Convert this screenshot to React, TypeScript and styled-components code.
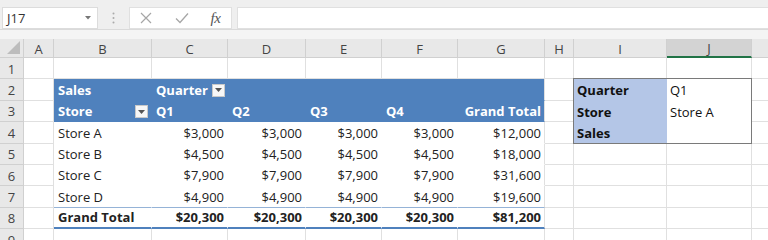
import React from 'react';
import styled, { createGlobalStyle } from 'styled-components';

const colors = {
  bar: '#efefef',
  strip: '#f4f4f4',
  barLine: '#dadada',
  head: '#e8e8e8',
  headActive: '#d3d3d3',
  headLine: '#d0d0d0',
  grid: '#e0e0e0',
  pivot: '#4f81bd',
  rule: '#95b3d7',
  label: '#b4c6e7',
  green: '#217346',
  text: '#222',
  headText: '#444',
};

const font = '"Open Sans", "Liberation Sans", sans-serif';

const GlobalStyle = createGlobalStyle`
  html, body {
    margin: 0;
    padding: 0;
    background: #fff;
    font-family: ${font};
  }
`;

const Window = styled.div`
  width: 768px;
  height: 240px;
  overflow: hidden;
  background: #fff;
`;

const Toolbar = styled.div`
  height: 30px;
  box-sizing: border-box;
  padding: 7px 0 0 2px;
  display: flex;
  align-items: flex-start;
  background: ${colors.bar};
  border-bottom: 1px solid ${colors.barLine};
`;

const NameBox = styled.div`
  width: 96px;
  height: 22px;
  box-sizing: border-box;
  background: #fff;
  border: 1px solid #dcdcdc;
  display: flex;
  align-items: center;
  justify-content: space-between;
  padding: 0 6px 0 4px;
  font-size: 13px;
  color: #333;
`;

const Grip = styled.div`
  width: 31px;
  height: 22px;
  display: flex;
  align-items: center;
  justify-content: center;
`;

const FxButtons = styled.div`
  width: 103px;
  height: 22px;
  box-sizing: border-box;
  background: #fff;
  border: 1px solid #e0e0e0;
  display: grid;
  grid-template-columns: 32px 40px 1fr;
  align-items: center;
  justify-items: center;
`;

const Fx = styled.span`
  font-family: "Liberation Serif", serif;
  font-style: italic;
  font-size: 15px;
  color: #555;
  letter-spacing: -0.5px;
  margin-right: 2px;
`;

const FormulaInput = styled.div`
  flex: 1;
  height: 22px;
  margin-left: 5px;
  background: #fff;
  border: 1px solid #e0e0e0;
  border-right: none;
  box-sizing: border-box;
`;

const Strip = styled.div`
  height: 9px;
  background: ${colors.strip};
`;

const Grid = styled.div`
  display: grid;
  grid-template-columns: 24px 30px 98px 76px 78px 76px 76px 87px 29px 93px 85px 140px;
  grid-template-rows: 19px repeat(9, 21.4px);
  font-size: 13px;
  color: ${colors.text};
`;

const Corner = styled.div`
  background: ${colors.head};
  border-right: 1px solid ${colors.headLine};
  border-bottom: 1px solid ${colors.headLine};
  display: flex;
  align-items: flex-end;
  justify-content: flex-end;
  padding: 0 3px 3px 0;
`;

const ColHead = styled.div<{ $active?: boolean }>`
  background: ${(p) => (p.$active ? colors.headActive : colors.head)};
  border-right: 1px solid ${colors.headLine};
  border-bottom: ${(p) => (p.$active ? `2px solid ${colors.green}` : `1px solid ${colors.headLine}`)};
  box-sizing: border-box;
  display: flex;
  align-items: center;
  justify-content: center;
  font-size: 13px;
  color: ${colors.headText};
  padding-top: 1px;
`;

const RowHead = styled.div`
  background: ${colors.head};
  border-right: 1px solid ${colors.headLine};
  border-bottom: 1px solid ${colors.headLine};
  display: flex;
  align-items: center;
  justify-content: center;
  font-size: 13px;
  color: ${colors.headText};
  padding-top: 1px;
`;

type Kind = 'blank' | 'head' | 'body' | 'total';

interface CellProps {
  $kind: Kind;
  $right?: boolean;
  $rule?: boolean;
  $edge?: boolean;
}

const fill = (k: Kind) => (k === 'head' ? colors.pivot : '#fff');

const rightLine = (p: CellProps) => {
  if (p.$kind === 'blank' || p.$edge) return colors.grid;
  return fill(p.$kind);
};

const bottomLine = (p: CellProps) => {
  if (p.$kind === 'total') return `2px solid ${colors.pivot}`;
  if (p.$rule) return `1px solid ${colors.rule}`;
  if (p.$kind === 'blank') return `1px solid ${colors.grid}`;
  return `1px solid ${fill(p.$kind)}`;
};

const Cell = styled.div<CellProps>`
  box-sizing: border-box;
  min-width: 0;
  overflow: hidden;
  white-space: nowrap;
  display: flex;
  align-items: flex-end;
  justify-content: ${(p) => (p.$right ? 'flex-end' : 'flex-start')};
  gap: 4px;
  padding: 0 3px 0 4px;
  line-height: 19px;
  background: ${(p) => fill(p.$kind)};
  color: ${(p) => (p.$kind === 'head' ? '#fff' : colors.text)};
  font-weight: ${(p) => (p.$kind === 'head' || p.$kind === 'total' ? 700 : 400)};
  border-right: 1px solid ${rightLine};
  border-bottom: ${bottomLine};
`;

const CellText = styled.span<{ $right?: boolean }>`
  flex: 1;
  text-align: ${(p) => (p.$right ? 'right' : 'left')};
`;

const FilterButton = styled.span`
  flex: none;
  width: 13px;
  height: 13px;
  margin-bottom: 3px;
  box-sizing: border-box;
  background: #f7f7f7;
  border: 1px solid #c9c9c9;
  display: flex;
  align-items: center;
  justify-content: center;
`;

const Lookup = styled.div`
  grid-column: 10 / 12;
  grid-row: 3 / 6;
  margin: -1px 0 0 -1px;
  border: 1px solid #7a7a7a;
  display: grid;
  grid-template-columns: 93px 1fr;
  grid-auto-rows: 1fr;
  background: #fff;
  font-size: 13px;
`;

const LookupCell = styled.div<{ $label?: boolean }>`
  display: flex;
  align-items: flex-end;
  padding: 0 3px 0 3px;
  line-height: 19px;
  background: ${(p) => (p.$label ? colors.label : '#fff')};
  font-weight: ${(p) => (p.$label ? 700 : 400)};
  color: #111;
`;

interface Spec {
  text?: string;
  kind?: Kind;
  right?: boolean;
  filter?: boolean;
  rule?: boolean;
}

const COLS = ['A', 'B', 'C', 'D', 'E', 'F', 'G', 'H', 'I', 'J', 'K'];
const PIVOT = ['B', 'C', 'D', 'E', 'F', 'G'];

const money = (vals: string[], kind: Kind, rule?: boolean): Record<string, Spec> => {
  const out: Record<string, Spec> = {};
  vals.forEach((v, i) => {
    out[PIVOT[i]] = { text: v, kind, right: i > 0, rule };
  });
  return out;
};

const rows: Record<string, Spec>[] = [
  {},
  {
    B: { text: 'Sales', kind: 'head' },
    C: { text: 'Quarter', kind: 'head', filter: true },
    D: { kind: 'head' },
    E: { kind: 'head' },
    F: { kind: 'head' },
    G: { kind: 'head' },
  },
  {
    B: { text: 'Store', kind: 'head', filter: true },
    C: { text: 'Q1', kind: 'head' },
    D: { text: 'Q2', kind: 'head' },
    E: { text: 'Q3', kind: 'head' },
    F: { text: 'Q4', kind: 'head' },
    G: { text: 'Grand Total', kind: 'head', right: true },
  },
  money(['Store A', '$3,000', '$3,000', '$3,000', '$3,000', '$12,000'], 'body'),
  money(['Store B', '$4,500', '$4,500', '$4,500', '$4,500', '$18,000'], 'body'),
  money(['Store C', '$7,900', '$7,900', '$7,900', '$7,900', '$31,600'], 'body'),
  money(['Store D', '$4,900', '$4,900', '$4,900', '$4,900', '$19,600'], 'body', true),
  money(['Grand Total', '$20,300', '$20,300', '$20,300', '$20,300', '$81,200'], 'total'),
  {},
];

const lookup = [
  ['Quarter', 'Q1'],
  ['Store', 'Store A'],
  ['Sales', ''],
];

const Caret = ({ color = '#666' }: { color?: string }) => (
  <svg width="7" height="4" viewBox="0 0 7 4">
    <polygon points="0,0 7,0 3.5,4" fill={color} />
  </svg>
);

const App: React.FC = () => {
  return (
    <Window>
      <GlobalStyle />
      <Toolbar>
        <NameBox>
          <span>J17</span>
          <svg width="6" height="4" viewBox="0 0 6 4">
            <polygon points="0,0 6,0 3,3.5" fill="#777" />
          </svg>
        </NameBox>
        <Grip>
          <svg width="3" height="12" viewBox="0 0 3 12">
            <circle cx="1.5" cy="1.5" r="1" fill="#aaa" />
            <circle cx="1.5" cy="6" r="1" fill="#aaa" />
            <circle cx="1.5" cy="10.5" r="1" fill="#aaa" />
          </svg>
        </Grip>
        <FxButtons>
          <svg width="12" height="12" viewBox="0 0 12 12">
            <path d="M1 1 L11 11 M11 1 L1 11" stroke="#a6a6a6" strokeWidth="1.2" />
          </svg>
          <svg width="14" height="12" viewBox="0 0 14 12">
            <path d="M1 6.5 L5 10.5 L13 1.5" stroke="#a6a6a6" strokeWidth="1.3" fill="none" />
          </svg>
          <Fx>fx</Fx>
        </FxButtons>
        <FormulaInput />
      </Toolbar>
      <Strip />
      <Grid>
        <Corner>
          <svg width="13" height="13" viewBox="0 0 13 13">
            <polygon points="13,0 13,13 0,13" fill="#bdbdbd" />
          </svg>
        </Corner>
        {COLS.map((c) => (
          <ColHead key={c} $active={c === 'J'}>
            {c}
          </ColHead>
        ))}
        {rows.map((row, r) => {
          const n = r + 1;
          return (
            <React.Fragment key={n}>
              <RowHead>{n}</RowHead>
              {COLS.map((c) => {
                if ((c === 'I' || c === 'J') && n >= 2 && n <= 4) return null;
                const s = row[c] || {};
                const kind = s.kind || 'blank';
                return (
                  <Cell
                    key={c}
                    $kind={kind}
                    $right={s.right}
                    $rule={s.rule}
                    $edge={c === 'G'}
                  >
                    {s.text && <CellText $right={s.right}>{s.text}</CellText>}
                    {s.filter && (
                      <FilterButton>
                        <Caret color="#555" />
                      </FilterButton>
                    )}
                  </Cell>
                );
              })}
            </React.Fragment>
          );
        })}
        <Lookup>
          {lookup.map(([label, value]) => (
            <React.Fragment key={label}>
              <LookupCell $label>{label}</LookupCell>
              <LookupCell>{value}</LookupCell>
            </React.Fragment>
          ))}
        </Lookup>
      </Grid>
    </Window>
  );
};

export default App;
